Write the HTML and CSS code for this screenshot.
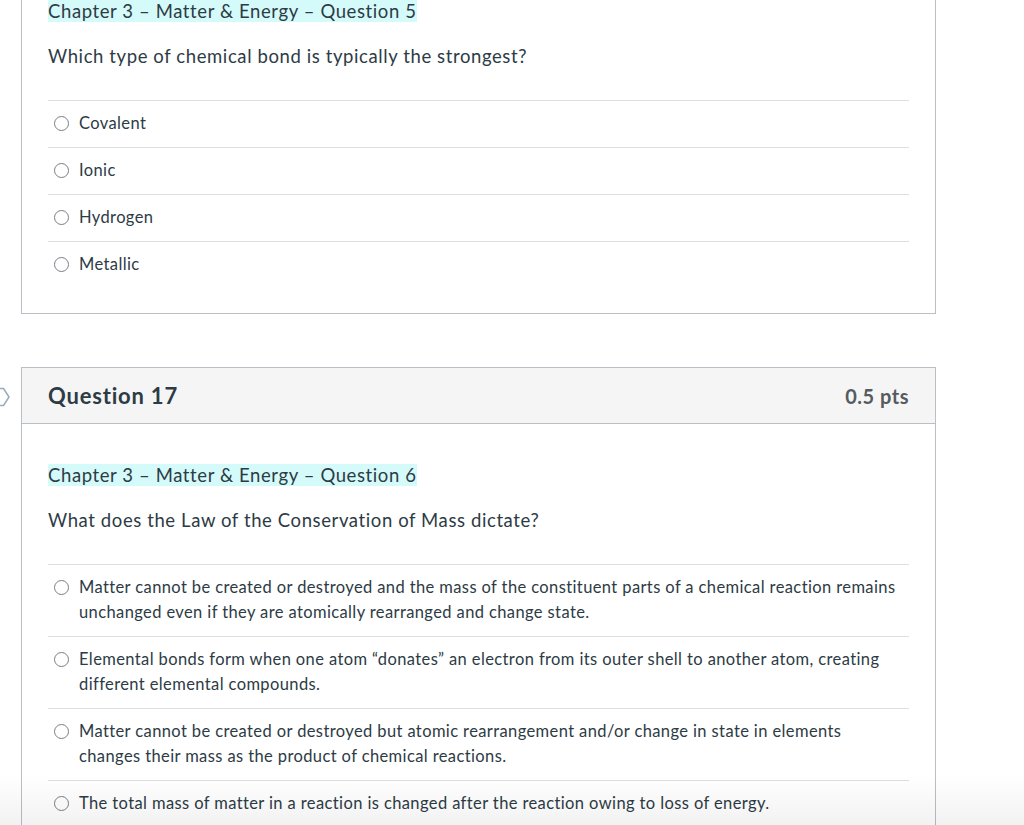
FILE: index.html
```html
<!DOCTYPE html>
<html lang="en">
<head>
<meta charset="utf-8">
<title>Quiz</title>
<link rel="stylesheet" href="styles.css">
</head>
<body>
<div class="page">
  <section class="card card-first">
    <div class="qbody">
      <div class="chapter"><span class="hl">Chapter 3 – Matter &amp; Energy – Question 5</span></div>
      <p class="qtext">Which type of chemical bond is typically the strongest?</p>
      <div class="answers">
        <div class="answer"><span class="radio"></span><span class="atext">Covalent</span></div>
        <div class="answer"><span class="radio"></span><span class="atext">Ionic</span></div>
        <div class="answer"><span class="radio"></span><span class="atext">Hydrogen</span></div>
        <div class="answer"><span class="radio"></span><span class="atext">Metallic</span></div>
      </div>
    </div>
  </section>

  <section class="card card-second">
    <svg class="flag" width="12" height="20" viewBox="0 0 12 20"><path d="M-4 1.5 H3.5 L9 10 L3.5 18.5 H-4" fill="none" stroke="#9aacbe" stroke-width="1.5" stroke-linejoin="round"/></svg>
    <header class="qhead">
      <h2 class="qtitle">Question 17</h2>
      <span class="pts">0.5 pts</span>
    </header>
    <div class="qbody">
      <div class="chapter"><span class="hl">Chapter 3 – Matter &amp; Energy – Question 6</span></div>
      <p class="qtext">What does the Law of the Conservation of Mass dictate?</p>
      <div class="answers">
        <div class="answer"><span class="radio"></span><span class="atext">Matter cannot be created or destroyed and the mass of the constituent parts of a chemical reaction remains unchanged even if they are atomically rearranged and change state.</span></div>
        <div class="answer"><span class="radio"></span><span class="atext">Elemental bonds form when one atom “donates” an electron from its outer shell to another atom, creating different elemental compounds.</span></div>
        <div class="answer"><span class="radio"></span><span class="atext">Matter cannot be created or destroyed but atomic rearrangement and/or change in state in elements changes their mass as the product of chemical reactions.</span></div>
        <div class="answer"><span class="radio"></span><span class="atext">The total mass of matter in a reaction is changed after the reaction owing to loss of energy.</span></div>
      </div>
    </div>
  </section>
</div>
<div class="fade"></div>
</body>
</html>
```

FILE: styles.css
```css
html, body {
  margin: 0;
  padding: 0;
  background: #fff;
  overflow: hidden;
}
body {
  font-family: Lato, "Open Sans", sans-serif;
  color: #2d3b45;
  height: 825px;
}
.page {
  padding-left: 21px;
  width: 915px;
}
.card {
  position: relative;
  border: 1px solid #b9bfc4;
  background: #fff;
}
.card-first {
  margin-top: -41px;
}
.card-second {
  margin-top: 53px;
}
.qhead {
  display: flex;
  align-items: center;
  justify-content: space-between;
  height: 55px;
  padding: 0 26px;
  background: #f5f5f5;
  border-bottom: 1px solid #b9bfc4;
}
.qtitle {
  margin: 0;
  font-size: 22px;
  letter-spacing: 0.8px;
  font-weight: 700;
  color: #2d3b45;
}
.pts {
  font-size: 20px;
  letter-spacing: 0.5px;
  font-weight: 700;
  color: #555b61;
}
.qbody {
  padding: 40px 26px 25px;
}
.chapter {
  font-size: 18.5px;
  letter-spacing: 0.6px;
  line-height: 22px;
}
.hl {
  background: #d5fafa;
}
.qtext {
  margin: 23px 0 33px;
  font-size: 18.5px;
  letter-spacing: 0.6px;
  line-height: 22px;
}
.answer {
  display: flex;
  align-items: flex-start;
  border-top: 1px solid #dcdfe2;
  padding: 10px 0 11px;
  font-size: 16.5px;
  letter-spacing: 0.39px;
  line-height: 25px;
}
.radio {
  flex: none;
  width: 13px;
  height: 13px;
  border: 1px solid #7a7f84;
  border-radius: 50%;
  margin: 5px 10px 0 6px;
}
.atext {
  flex: 1;
  padding-right: 10px;
}
.flag {
  position: absolute;
  left: -22px;
  top: 19px;
}
.fade {
  position: fixed;
  left: 0;
  right: 0;
  bottom: 0;
  height: 50px;
  background: linear-gradient(rgba(0,0,0,0), rgba(0,0,0,0.05));
  pointer-events: none;
}
```
